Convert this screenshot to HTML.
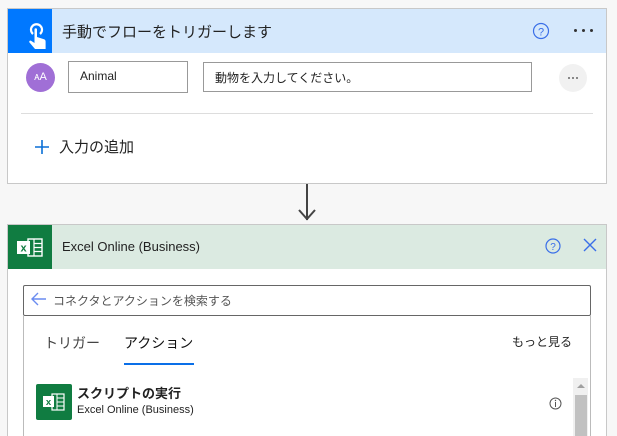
<!DOCTYPE html><html><head><meta charset="utf-8"><style>
*{box-sizing:border-box;margin:0;padding:0}
html,body{width:617px;height:436px;overflow:hidden}
body{background:#f7f7f7;font-family:"Liberation Sans","Noto Sans CJK JP",sans-serif;position:relative;color:#222}
.a{position:absolute}
.dots{display:flex;gap:5px}
.dots i{display:block;border-radius:50%}
</style></head><body>
<div class="a" style="left:7px;top:8px;width:600px;height:176px;background:#fff;border:1px solid #c8c8c8"></div>
<div class="a" style="left:8px;top:9px;width:598px;height:44px;background:#d5e8fc"></div>
<div class="a" style="left:8px;top:9px;width:44px;height:44px;background:#0078ff">
<svg width="44" height="44" viewBox="0 0 44 44"><path d="M25 25a5.5 5.5 0 1 1 7 0" fill="none" stroke="#fff" stroke-width="2.2"/><path d="M26.5 20.5c0-1.6 2.5-1.6 2.5 0v7.5l7 2.2c1.2.4 1.6 1.2 1.6 2.4v7.4H27l-5.5-6.5c-.8-1 .4-2.4 1.5-1.7l3.5 2.2z" fill="#fff"/></svg></div>
<div class="a" style="left:62px;top:21px;font-size:15px">手動でフローをトリガーします</div>
<svg class="a" style="left:532px;top:22px" width="18" height="18"><circle cx="9" cy="9" r="7.5" fill="none" stroke="#3a6fe8" stroke-width="1.2"/><text x="9" y="13.5" font-size="11" text-anchor="middle" fill="#3a6fe8" font-family="Liberation Sans">?</text></svg>
<div class="a dots" style="left:574px;top:29px"><i style="width:3px;height:3px;background:#333"></i><i style="width:3px;height:3px;background:#333"></i><i style="width:3px;height:3px;background:#333"></i></div>
<div class="a" style="left:26px;top:63px;width:29px;height:29px;border-radius:50%;background:#a06fd6;color:#fff;font-size:11px;text-align:center;line-height:29px">ᴀA</div>
<div class="a" style="left:68px;top:61px;width:120px;height:32px;border:1px solid #999;font-size:12px;padding:7px 0 0 11px">Animal</div>
<div class="a" style="left:203px;top:62px;width:329px;height:30px;border:1px solid #999;font-size:12px;padding:6px 0 0 11px">動物を入力してください。</div>
<div class="a" style="left:559px;top:64px;width:28px;height:28px;border-radius:50%;background:#f1f1f1"></div>
<div class="a dots" style="left:568px;top:77px;gap:2px"><i style="width:2px;height:2px;background:#888;border-radius:0"></i><i style="width:2px;height:2px;background:#888;border-radius:0"></i><i style="width:2px;height:2px;background:#888;border-radius:0"></i></div>
<div class="a" style="left:21px;top:113px;width:572px;height:1px;background:#ddd"></div>
<svg class="a" style="left:35px;top:140px" width="14" height="14"><path d="M7 0v14M0 7h14" stroke="#0a6fd6" stroke-width="1.6"/></svg>
<div class="a" style="left:59px;top:136px;font-size:15px">入力の追加</div>
<div class="a" style="left:306px;top:184px;width:2px;height:36px;background:#444"></div>
<svg class="a" style="left:297px;top:208px" width="20" height="14"><path d="M2 2l8 9 8-9" fill="none" stroke="#444" stroke-width="2"/></svg>
<div class="a" style="left:7px;top:224px;width:600px;height:220px;background:#fff;border:1px solid #c8c8c8"></div>
<div class="a" style="left:8px;top:225px;width:598px;height:44px;background:#dbeae1"></div>
<div class="a" style="left:8px;top:225px;width:44px;height:44px;background:#107c41">
<svg width="44" height="44"><rect x="20" y="14" width="14" height="17" fill="none" stroke="#fff" stroke-width="1.4"/><path d="M26 14v17M26 18.5h8M26 22.5h8M26 26.5h8" stroke="#fff" stroke-width="1.2"/><rect x="9" y="16" width="13" height="13" fill="#fff"/><text x="15.5" y="26.5" font-size="11" font-weight="bold" fill="#107c41" text-anchor="middle" font-family="Liberation Sans">x</text></svg></div>
<div class="a" style="left:62px;top:239px;font-size:13px">Excel Online (Business)</div>
<svg class="a" style="left:545px;top:238px" width="16" height="16"><circle cx="8" cy="8" r="7" fill="none" stroke="#3a6fe8" stroke-width="1.2"/><text x="8" y="12" font-size="10" text-anchor="middle" fill="#3a6fe8" font-family="Liberation Sans">?</text></svg>
<svg class="a" style="left:583px;top:238px" width="14" height="14"><path d="M1 1l12 12M13 1L1 13" stroke="#3a6fe8" stroke-width="1.4"/></svg>
<div class="a" style="left:23px;top:285px;width:568px;height:31px;border:1px solid #666;border-radius:2px"></div>
<svg class="a" style="left:30px;top:292px" width="17" height="14"><path d="M16 7H2M8 1L2 7l6 6" fill="none" stroke="#6a8cf0" stroke-width="1.4"/></svg>
<div class="a" style="left:53px;top:292px;font-size:12px;color:#555">コネクタとアクションを検索する</div>
<div class="a" style="left:23px;top:315px;width:568px;height:130px;border-left:1px solid #bbb;border-right:1px solid #bbb"></div>
<div class="a" style="left:44px;top:333px;font-size:14px;color:#444">トリガー</div>
<div class="a" style="left:124px;top:333px;font-size:14px;color:#111">アクション</div>
<div class="a" style="left:124px;top:363px;width:70px;height:2px;background:#0a6fe8"></div>
<div class="a" style="left:512px;top:333px;font-size:12px">もっと見る</div>
<div class="a" style="left:36px;top:384px;width:36px;height:36px;background:#107c41;border-radius:2px">
<svg width="36" height="36"><rect x="16" y="10" width="12" height="16" fill="none" stroke="#fff" stroke-width="1.2"/><path d="M21 10v16M21 14h7M21 18h7M21 22h7" stroke="#fff" stroke-width="1"/><rect x="7" y="12" width="11" height="11" fill="#fff"/><text x="12.5" y="21" font-size="9.5" font-weight="bold" fill="#107c41" text-anchor="middle" font-family="Liberation Sans">x</text></svg></div>
<div class="a" style="left:77px;top:383px;font-size:13px;font-weight:bold">スクリプトの実行</div>
<div class="a" style="left:77px;top:404px;font-size:11px">Excel Online (Business)</div>
<svg class="a" style="left:549px;top:397px" width="13" height="13"><circle cx="6.5" cy="6.5" r="5.5" fill="none" stroke="#555"/><path d="M6.5 5v5" stroke="#555"/><circle cx="6.5" cy="3.5" r=".7" fill="#555"/></svg>
<div class="a" style="left:573px;top:378px;width:15px;height:60px;background:#f0f0f0"></div>
<div class="a" style="left:575px;top:395px;width:12px;height:45px;background:#c1c1c1"></div>
<svg class="a" style="left:576px;top:383px" width="10" height="6"><path d="M1 5l4-4 4 4z" fill="#a0a0a0"/></svg>
</body></html>
